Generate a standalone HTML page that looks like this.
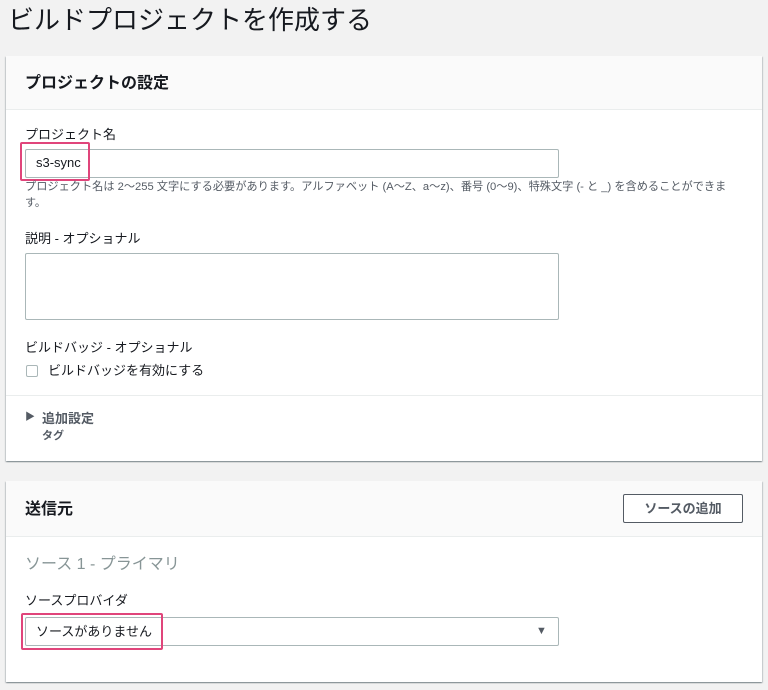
<!DOCTYPE html>
<html><head><meta charset="utf-8"><style>
*{box-sizing:border-box;margin:0;padding:0}
body{width:768px;height:690px;background:#f2f2f2;font-family:"Liberation Sans","Noto Sans CJK JP",sans-serif;color:#16191f;position:relative;overflow:hidden}
.a{position:absolute;white-space:nowrap;line-height:1.2}
.card{position:absolute;left:6px;width:756px;background:#fff;box-shadow:0 1px 1px rgba(0,28,36,.3),1px 1px 1px rgba(0,28,36,.15),-1px 1px 1px rgba(0,28,36,.15)}
.hd{position:absolute;left:0;top:0;width:100%;background:#fafafa;border-bottom:1px solid #eaeded}
.inp{position:absolute;border:1px solid #aab7b8;background:#fff;border-radius:2px}
.pink{position:absolute;border:2px solid #e0457b;border-radius:2px}
.lbl{font-size:13px;color:#16191f}
</style></head><body>
<div class="a" style="left:8px;top:5px;font-size:26px;color:#16191f">ビルドプロジェクトを作成する</div>

<div class="card" style="top:56px;height:405px">
 <div class="hd" style="height:54px"></div>
 <div class="a" style="left:19px;top:18px;font-size:16px;font-weight:bold">プロジェクトの設定</div>
 <div class="a lbl" style="left:19px;top:71px">プロジェクト名</div>
 <div class="inp" style="left:19px;top:93px;width:534px;height:29px"></div>
 <div class="a" style="left:30px;top:99px;font-size:13px">s3-sync</div>
 <div class="pink" style="left:14px;top:86px;width:70px;height:39px"></div>
 <div class="a" style="left:19px;top:125px;font-size:11.2px;color:#545b64">プロジェクト名は 2〜255 文字にする必要があります。アルファベット (A〜Z、a〜z)、番号 (0〜9)、特殊文字 (- と _) を含めることができま</div>
 <div class="a" style="left:19px;top:141px;font-size:11px;color:#545b64">す。</div>
 <div class="a lbl" style="left:19px;top:175px">説明 - オプショナル</div>
 <div class="inp" style="left:19px;top:197px;width:534px;height:67px"></div>
 <div class="a lbl" style="left:19px;top:284px">ビルドバッジ - オプショナル</div>
 <div class="a" style="left:20px;top:309px;width:12px;height:12px;border:1px solid #aab7b8;border-radius:2px"></div>
 <div class="a lbl" style="left:42px;top:307px">ビルドバッジを有効にする</div>
 <div class="a" style="left:0;top:339px;width:756px;height:1px;background:#eaeded"></div>
 <div class="a" style="left:19px;top:356px;font-size:10px;color:#545b64">▶</div>
 <div class="a" style="left:36px;top:355px;font-size:13px;font-weight:bold;color:#545b64">追加設定</div>
 <div class="a" style="left:36px;top:374px;font-size:11px;font-weight:bold;color:#545b64">タグ</div>
</div>

<div class="card" style="top:481px;height:201px">
 <div class="hd" style="height:56px"></div>
 <div class="a" style="left:19px;top:19px;font-size:16px;font-weight:bold">送信元</div>
 <div class="a" style="left:617px;top:13px;width:120px;height:29px;border:1px solid #545b64;border-radius:2px;background:#fff;font-size:13px;font-weight:bold;color:#545b64;text-align:center;line-height:27px">ソースの追加</div>
 <div class="a" style="left:19px;top:74px;font-size:16px;color:#879596">ソース 1 - プライマリ</div>
 <div class="a lbl" style="left:19px;top:112px">ソースプロバイダ</div>
 <div class="inp" style="left:19px;top:136px;width:534px;height:29px"></div>
 <div class="a" style="left:30px;top:143px;font-size:13px">ソースがありません</div>
 <div class="a" style="left:530px;top:144px;font-size:11px;color:#545b64">▼</div>
 <div class="pink" style="left:15px;top:132px;width:142px;height:37px"></div>
</div>
</body></html>
